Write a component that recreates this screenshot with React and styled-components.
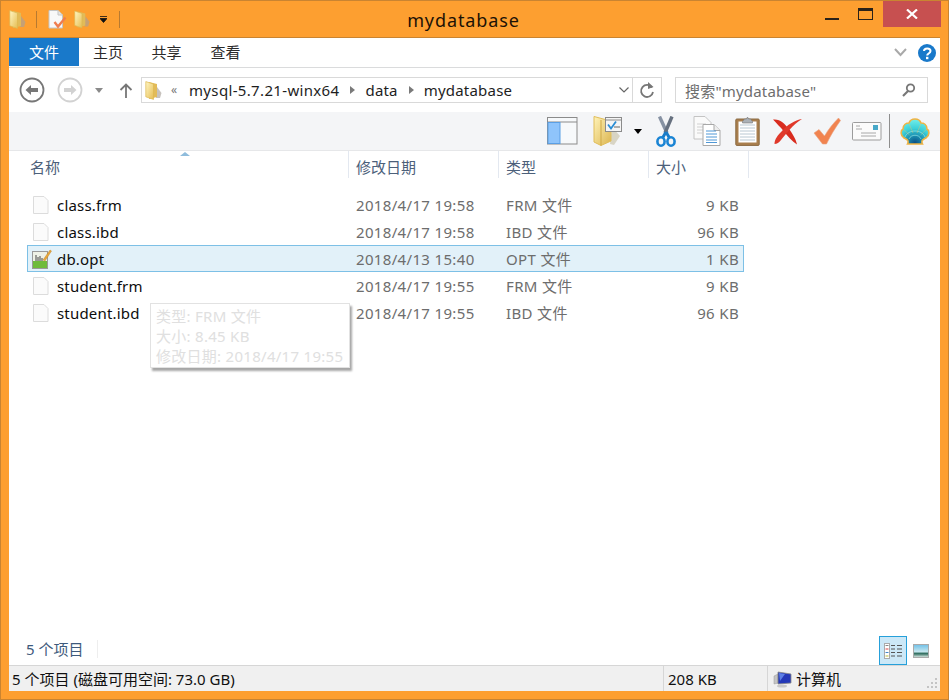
import styled, { createGlobalStyle } from "styled-components"

const GlobalStyle = createGlobalStyle`
  html, body {
    margin: 0;
    padding: 0;
    background: #fd9f30;
  }
  * {
    box-sizing: border-box;
  }
`

const uiFont = `"Noto Sans", "Noto Sans CJK SC", sans-serif`

const Window = styled.div`
  width: 949px;
  height: 700px;
  background: #fd9f30;
  border: 1px solid #c98431;
  font-family: ${uiFont};
  color: #111;
  display: flex;
  flex-direction: column;
  overflow: hidden;
`

const TitleBar = styled.div`
  height: 36px;
  flex: none;
  padding-left: 8px;
  display: flex;
  align-items: flex-start;
  position: relative;
`

const Quick = styled.div`
  display: flex;
  align-items: center;
  height: 20px;
  margin-top: 8px;
`

const QuickSep = styled.span`
  width: 1px;
  height: 17px;
  background: #b87a30;
  margin: 0 ${props => props.$right || 0}px 0 ${props => props.$left}px;
`

const QuickGap = styled.span`
  width: ${props => props.$w}px;
`

const QuickCaret = styled.svg`
  margin-left: 10px;
`

const Title = styled.div`
  position: absolute;
  left: 0;
  right: 22px;
  top: 7px;
  text-align: center;
  font-size: 18px;
  letter-spacing: .9px;
  line-height: 24px;
  color: #1c1206;
`

const WinButtons = styled.div`
  position: absolute;
  top: 0;
  right: 7px;
  display: flex;
  align-items: flex-start;
`

const WinButton = styled.div`
  width: ${props => props.$w}px;
  height: 26px;
  padding-right: ${props => props.$pr || 0}px;
  display: flex;
  align-items: center;
  justify-content: center;
  background: ${props => props.$close ? "#c75050" : "transparent"};
`

const MinBar = styled.svg`
  margin-top: 9px;
`

const Frame = styled.div`
  flex: 1;
  margin: 0 8px;
  background: #fff;
  border-top: 1px solid #c98431;
  display: flex;
  flex-direction: column;
  position: relative;
  min-height: 0;
`

const Tabs = styled.div`
  height: 30px;
  flex: none;
  display: flex;
  border-bottom: 1px solid #dadbdc;
`

const Tab = styled.div`
  width: ${props => props.$w}px;
  font-size: 15px;
  line-height: 29px;
  text-align: center;
  height: 28px;
  background: ${props => props.$active ? "#1979ca" : "transparent"};
  color: ${props => props.$active ? "#fff" : "#2b2b2b"};
`

const RibbonTail = styled.div`
  margin-left: auto;
  display: flex;
  align-items: center;
  gap: 11px;
  padding-right: 4px;
`

const NavRow = styled.div`
  height: 44px;
  flex: none;
  display: flex;
  align-items: center;
  padding-left: 10px;
`

const NavBtn = styled.div`
  display: flex;
  align-items: center;
  justify-content: center;
  width: ${props => props.$w}px;
  margin-left: ${props => props.$ml || 0}px;
`

const AddressBox = styled.div`
  width: 521px;
  height: 26px;
  margin-left: 4px;
  border: 1px solid #d9d9d9;
  display: flex;
  align-items: center;
  padding-left: 3px;
  font-size: 15px;
  color: #1e1e1e;
`

const Crumb = styled.span`
  letter-spacing: ${props => props.$wide ? ".34px" : ".2px"};
  line-height: 22px;
  margin-top: -1px;
`

const Overflow = styled.span`
  width: 8px;
  margin: 0 10px 0 9px;
  font-size: 12px;
  line-height: 12px;
  color: #777;
`

const CrumbArrow = styled.span`
  width: 0;
  height: 0;
  border-left: 5px solid #7a7a7a;
  border-top: 4px solid transparent;
  border-bottom: 4px solid transparent;
  margin: 0 10px 0 11px;
`

const AddressEnd = styled.div`
  margin-left: auto;
  height: 100%;
  display: flex;
  align-items: center;
`

const RefreshSlot = styled.div`
  width: 29px;
  height: 100%;
  border-left: 1px solid #d9d9d9;
  display: flex;
  align-items: center;
  justify-content: center;
`

const ChevronSlot = styled.div`
  width: 16px;
  display: flex;
  justify-content: center;
`

const SearchBox = styled.div`
  width: 253px;
  height: 26px;
  margin-left: 13px;
  border: 1px solid #d9d9d9;
  display: flex;
  align-items: center;
  padding: 0 11px 0 9px;
  justify-content: space-between;
  font-size: 15px;
  letter-spacing: .2px;
  color: #6d6d6d;
`

const CommandBar = styled.div`
  height: 39px;
  flex: none;
  background: #f4f5f7;
  border-bottom: 1px solid #e6e7e9;
  display: flex;
  align-items: center;
  padding-left: 538px;
`

const ToolIcon = styled.div`
  width: ${props => props.$w}px;
  margin-left: ${props => props.$ml || 0}px;
  display: flex;
  align-items: center;
  justify-content: center;
`

const ToolSep = styled.span`
  width: 1px;
  height: 34px;
  background: #8e8e8e;
  margin: 0 10px 0 7px;
`

const Caret = styled.span`
  width: 0;
  height: 0;
  border-top: 5px solid #000;
  border-left: 4.5px solid transparent;
  border-right: 4.5px solid transparent;
  margin-left: 12px;
`

const HeaderRow = styled.div`
  height: 27px;
  flex: none;
  display: flex;
  position: relative;
  padding-left: 13px;
`

const HeaderCell = styled.div`
  width: ${props => props.$w}px;
  padding-left: ${props => props.$pl || 7}px;
  font-size: 15px;
  line-height: 33px;
  color: #4c607a;
  border-right: 1px solid #e3e8f0;
`

const SortMark = styled.span`
  position: absolute;
  left: 171px;
  top: 1px;
  width: 0;
  height: 0;
  border-bottom: 4px solid #8fbcdc;
  border-left: 5px solid transparent;
  border-right: 5px solid transparent;
`

const FileList = styled.div`
  flex: 1;
  padding: 13px 0 0 18px;
  position: relative;
  min-height: 0;
`

const Row = styled.div`
  width: 717px;
  height: 27px;
  display: grid;
  grid-template-columns: 30px 299px 150px 142px 91px;
  align-items: center;
  font-size: 15px;
  border: 1px solid ${props => props.$selected ? "#7dc0e6" : "transparent"};
  background: ${props => props.$selected ? "#e2f1f9" : "transparent"};
`

const RowIcon = styled.div`
  display: flex;
  justify-content: center;
  padding-right: ${props => props.$pr}px;
`

const Name = styled.div`
  color: #0d0d0d;
  margin-left: -1px;
  letter-spacing: .18px;
`

const Cell = styled.div`
  color: #6d6d6d;
  white-space: nowrap;
  margin-left: -1px;
  letter-spacing: .34px;
`

const SizeCell = styled(Cell)`
  text-align: right;
  padding-right: 1px;
`

const Tooltip = styled.div`
  position: absolute;
  left: 141px;
  top: 125px;
  width: 200px;
  height: 65px;
  background: #fff;
  border: 1px solid #e2e2e2;
  box-shadow: 2px 3px 2px rgba(0, 0, 0, 0.35);
  padding: 2px 5px;
  font-size: 15px;
  letter-spacing: .28px;
  line-height: 20px;
  color: #e0e0e0;
  white-space: nowrap;
`

const ViewFooter = styled.div`
  height: 33px;
  flex: none;
  display: flex;
  align-items: center;
  padding-left: 17px;
  font-size: 15px;
  color: #3e5a7c;
`

const FooterCount = styled.span`
  padding-right: 14px;
  border-right: 1px solid #eee;
  line-height: 18px;
`

const ViewToggles = styled.div`
  margin-left: auto;
  height: 100%;
  display: flex;
  align-items: flex-end;
  padding-right: 6px;
`

const ViewToggle = styled.div`
  width: ${props => props.$w}px;
  height: 29px;
  display: flex;
  align-items: center;
  justify-content: center;
  background: ${props => props.$active ? "#cce8f7" : "transparent"};
  border: 1px solid ${props => props.$active ? "#26a0da" : "transparent"};
`

const StatusBar = styled.div`
  height: 26px;
  flex: none;
  background: #f0f0f0;
  border-top: 1px solid #d6d6d6;
  display: flex;
  align-items: center;
  font-size: 15px;
  position: relative;
`

const StatusCell = styled.div`
  width: ${props => props.$w}px;
  padding-left: ${props => props.$pl}px;
  height: 100%;
  display: flex;
  align-items: center;
  gap: 3px;
  border-left: ${props => props.$line ? "1px solid #d6d6d6" : "none"};
  white-space: nowrap;
  color: #101010;
`

const Grip = styled.svg`
  position: absolute;
  right: 2px;
  bottom: 2px;
`

const BottomEdge = styled.div`
  height: 8px;
  flex: none;
`

const FolderIcon = ({ w = 17, h = 19 }) => (
  <svg width={w} height={h} viewBox="0 0 17 19">
    <defs>
      <linearGradient id="folderFace" x1="0" y1="0" x2="1" y2="1">
        <stop offset="0" stopColor="#fff6c4" />
        <stop offset="1" stopColor="#e6bd52" />
      </linearGradient>
    </defs>
    <path d="M12 6 L16.5 12 L15 17 H11 Z" fill="#a9a29a" opacity=".65" />
    <path d="M4 1 L12 3 V16 L4 18 Z" fill="#e2bb58" />
    <path d="M.8 .6 L8.5 3 V18.4 L.8 15.8 Z" fill="url(#folderFace)" stroke="#dcb750" strokeWidth=".7" />
  </svg>
)

const PageCheckIcon = () => (
  <svg width="19" height="19" viewBox="0 0 19 19">
    <path d="M1 .5 H10 L14.5 5 V18 H1 Z" fill="#f8f8f8" stroke="#c4c4c4" />
    <path d="M10 .5 V5 H14.5" fill="#e4e4e4" stroke="#c4c4c4" />
    <path d="M6.5 12 L10 16.5 L17.5 7.5" fill="none" stroke="#ef7d4f" strokeWidth="2.4" />
  </svg>
)

const BackIcon = ({ color }) => (
  <svg width="26" height="26" viewBox="0 0 26 26">
    <circle cx="13" cy="13" r="11.5" fill="#fff" stroke={color} strokeWidth="1.8" />
    <path d="M19 11 H12 V8 L6.5 13 L12 18 V15 H19 Z" fill={color} />
  </svg>
)

const ForwardIcon = ({ color }) => (
  <svg width="26" height="26" viewBox="0 0 26 26">
    <circle cx="13" cy="13" r="11.5" fill="#fff" stroke={color} strokeWidth="1.8" />
    <path d="M7 11 H14 V8 L19.5 13 L14 18 V15 H7 Z" fill={color} />
  </svg>
)

const SmallCaret = () => (
  <svg width="8" height="5" viewBox="0 0 8 5">
    <path d="M0 0 H8 L4 5 Z" fill="#8a8a8a" />
  </svg>
)

const UpIcon = () => (
  <svg width="14" height="15" viewBox="0 0 14 15">
    <path d="M7 1 V15 M1.5 7 L7 1.5 L12.5 7" fill="none" stroke="#777" strokeWidth="1.8" />
  </svg>
)

const LayoutIcon = () => (
  <svg width="31" height="28" viewBox="0 0 31 28">
    <rect x=".5" y=".5" width="29.5" height="26.5" fill="#f7f9fb" stroke="#8b8b8b" />
    <path d="M.5 5 H30" stroke="#8b8b8b" />
    <rect x="1" y="5.5" width="12" height="21" fill="#8fc4fb" stroke="#5b9fe4" />
  </svg>
)

const FolderOptionsIcon = () => (
  <svg width="29" height="30" viewBox="0 0 29 30">
    <defs>
      <linearGradient id="optFolder" x1="0" y1="0" x2="1" y2="1">
        <stop offset="0" stopColor="#fff3b8" />
        <stop offset="1" stopColor="#dcb550" />
      </linearGradient>
    </defs>
    <path d="M19 11 L27 20 L21 29 L17 28 Z" fill="#d8d4c4" />
    <path d="M1 .5 L18 5 V25 L8 29.5 L1 26 Z" fill="url(#optFolder)" stroke="#e0bd5a" />
    <path d="M8 4 V29.5" stroke="#cfa845" />
    <rect x="12.5" y="1.5" width="16" height="14" fill="#f5f5f5" stroke="#8b8b8b" />
    <path d="M12.5 4 H28.5" stroke="#8b8b8b" />
    <path d="M15 8.5 L18 12.5 L23 5.5" fill="none" stroke="#2a8dd4" strokeWidth="1.8" />
    <path d="M21 11 H27" stroke="#666" />
  </svg>
)

const ScissorsIcon = () => (
  <svg width="20" height="31" viewBox="0 0 20 31">
    <path d="M3.5 .5 L11 17" stroke="#8792a3" strokeWidth="3.4" />
    <path d="M16 .5 L9 17" stroke="#66707f" strokeWidth="3.4" />
    <path d="M10 16 L6.5 22 M10 16 L13.5 22" stroke="#1a7cc8" strokeWidth="3" />
    <ellipse cx="5" cy="25.5" rx="3.6" ry="4.2" fill="none" stroke="#1a84d4" strokeWidth="2.6" />
    <ellipse cx="15" cy="25.5" rx="3.6" ry="4.2" fill="none" stroke="#1a84d4" strokeWidth="2.6" />
  </svg>
)

const CopyIcon = () => (
  <svg width="28" height="30" viewBox="0 0 28 30">
    <path d="M1 .5 H12 L18 6.5 V23 H1 Z" fill="#fafafa" stroke="#c4c4c4" />
    <path d="M4 8 H13 M4 11 H13 M4 14 H13 M4 17 H9" stroke="#d0d0d0" />
    <path d="M10 8.5 H21 L27 14.5 V29.5 H10 Z" fill="#fff" stroke="#a8a8a8" />
    <path d="M21 8.5 V14.5 H27" fill="#eee" stroke="#a8a8a8" />
    <path d="M13 15 H23 M13 18 H24 M13 21 H24 M13 24 H24 M13 26.5 H24" stroke="#4f97d6" />
  </svg>
)

const ClipboardIcon = () => (
  <svg width="25" height="30" viewBox="0 0 25 30">
    <rect x=".8" y="3" width="23.4" height="26.4" rx="1" fill="#a97f4e" stroke="#8b6a42" />
    <rect x="3.5" y="5.5" width="18" height="21" fill="#fff" />
    <path d="M5 9 H20 M5 12 H20 M5 15 H20 M5 18 H20 M5 21 H20 M5 24 H20" stroke="#b9c8d2" />
    <path d="M7.5 5.5 L9.5 3 H11.5 L12.5 1 L13.5 3 H15.5 L17.5 5.5 V7 H7.5 Z" fill="#aab0b6" stroke="#777" strokeWidth=".6" />
  </svg>
)

const CrossIcon = () => (
  <svg width="30" height="27" viewBox="0 0 30 27">
    <path d="M1 1.5 C8 .5 13 6 17 11 C20 15 24 21 25 26.5 C20 23 15.5 18 12 13.5 C8 8.5 4.5 5.5 1 1.5 Z" fill="#d92c1f" />
    <path d="M30 1 C23 2 15 7 10 13 C6 17 2.5 21 2.5 26 C5 26 7 24.5 9 22 C13.5 16.5 21 6.5 30 1 Z" fill="#e0382a" />
  </svg>
)

const CheckIcon = () => (
  <svg width="28" height="28" viewBox="0 0 28 28">
    <path d="M1 16 L6 12.5 L11.5 19 C15.5 12 20.5 6 25.5 1 L27.5 3.5 C22.5 10.5 17.5 18.5 13.5 27 H9.5 Z" fill="#f1834f" stroke="#e9a27f" strokeWidth=".6" />
  </svg>
)

const MailIcon = () => (
  <svg width="30" height="19" viewBox="0 0 30 19">
    <rect x=".5" y=".5" width="28.5" height="17.5" rx="1" fill="#fbfbfb" stroke="#9c9c9c" />
    <rect x="21" y="3" width="5" height="5" fill="#47a8c8" />
    <path d="M4 4 H8 M4 7 H10 M9 11 H24 M9 14 H24" stroke="#a8a8a8" />
  </svg>
)

const ShellIcon = () => (
  <svg width="30" height="27" viewBox="0 0 30 27">
    <defs>
      <radialGradient id="shellFill" cx="0.5" cy="0.95" r="0.95">
        <stop offset="0" stopColor="#0b4f86" />
        <stop offset="0.3" stopColor="#1b8fb0" />
        <stop offset="0.6" stopColor="#3cd0d8" />
        <stop offset="1" stopColor="#74efea" />
      </radialGradient>
    </defs>
    <path d="M7.5 26 C9.5 22 6.5 21.5 3.5 19.5 C.5 17 .3 12.5 3 11 C3 6.5 6.5 5 9 5 C10 2 13 1 15 1 C17 1 20 2 21 5 C23.5 5 27 6.5 27 11 C29.7 12.5 29.5 17 26.5 19.5 C23.5 21.5 20.5 22 22.5 26 Z" fill="url(#shellFill)" stroke="#eeb343" strokeWidth="1.6" />
    <path d="M5 19 C8 11 22 11 25 19 M9 21 C11 16 19 16 21 21" fill="none" stroke="#a8f2ee" strokeWidth=".9" opacity=".65" />
    <path d="M9 5.5 L13 15 M21 5.5 L17 15 M3.2 11 L9.5 17 M26.8 11 L20.5 17" stroke="#e6c36a" strokeWidth=".7" opacity=".6" />
  </svg>
)

const PageIcon = () => (
  <svg width="16" height="18" viewBox="0 0 16 18">
    <path d="M.5 .5 H11 L15 4.5 V17.5 H.5 Z" fill="#fbfbfb" stroke="#dcdcdc" />
  </svg>
)

const OptIcon = () => (
  <svg width="20" height="20" viewBox="0 0 20 20">
    <rect x=".5" y="2.5" width="15" height="17" fill="#eef1e6" stroke="#9a9a9a" />
    <rect x="1" y="12" width="14" height="7" fill="#6ebb3c" />
    <path d="M4 6 V12 M6 8 V12 M8 7 V12 M10 9 V12" stroke="#444" />
    <path d="M11 11 L18 1 L19.5 2 L13 12 Z" fill="#e8a83a" stroke="#b87a20" strokeWidth=".4" />
  </svg>
)

const DetailsIcon = () => (
  <svg width="18" height="16" viewBox="0 0 18 16">
    <rect x=".5" y=".5" width="5" height="15" fill="#fff" stroke="#aaa" />
    <path d="M1.5 2.5 H4.5" stroke="#888" />
    <path d="M1.5 6 H4.5" stroke="#d44" />
    <path d="M1.5 9.5 H4.5" stroke="#48c" />
    <path d="M1.5 13 H4.5" stroke="#bb3" />
    <path d="M7 2.5 H11 M13 2.5 H18 M7 6 H11 M13 6 H18 M7 9.5 H11 M13 9.5 H18 M7 13 H11 M13 13 H18" stroke="#555" />
  </svg>
)

const PreviewIcon = () => (
  <svg width="16" height="14" viewBox="0 0 16 14">
    <defs>
      <linearGradient id="previewSky" x1="0" y1="0" x2="0" y2="1">
        <stop offset="0" stopColor="#6fc0e8" />
        <stop offset=".55" stopColor="#c5e6ee" />
        <stop offset=".7" stopColor="#2f6d5e" />
        <stop offset="1" stopColor="#e8f2ee" />
      </linearGradient>
    </defs>
    <rect x=".5" y=".5" width="15" height="13" fill="url(#previewSky)" stroke="#aaa" />
  </svg>
)

const ComputerIcon = () => (
  <svg width="20" height="18" viewBox="0 0 20 18">
    <path d="M1 6 L5 4 V13 L1 14 Z" fill="#c4c4c4" stroke="#999" strokeWidth=".5" />
    <path d="M5 2 L18 4 V13 L5 14 Z" fill="#2438b8" stroke="#888" strokeWidth=".8" />
    <path d="M6 3 L12 4 L7 11 Z" fill="#5d7fe6" />
    <ellipse cx="9" cy="16" rx="5" ry="1.5" fill="#c8c8c8" />
  </svg>
)

const files = [
  { name: "class.frm", date: "2018/4/17 19:58", type: "FRM 文件", size: "9 KB" },
  { name: "class.ibd", date: "2018/4/17 19:58", type: "IBD 文件", size: "96 KB" },
  { name: "db.opt", date: "2018/4/13 15:40", type: "OPT 文件", size: "1 KB", selected: true },
  { name: "student.frm", date: "2018/4/17 19:55", type: "FRM 文件", size: "9 KB" },
  { name: "student.ibd", date: "2018/4/17 19:55", type: "IBD 文件", size: "96 KB" },
]

const App = () => (
  <Window>
    <GlobalStyle />
    <TitleBar>
      <Quick>
        <FolderIcon />
        <QuickSep $left={10} $right={11} />
        <PageCheckIcon />
        <QuickGap $w={7} />
        <FolderIcon w={16} />
        <QuickCaret width="7" height="7" viewBox="0 0 7 7">
          <path d="M0 .5 H7 M0 2.5 H7 L3.5 6.5 Z" fill="#111" stroke="#111" strokeWidth=".8" />
        </QuickCaret>
        <QuickSep $left={12} />
      </Quick>
      <Title>mydatabase</Title>
      <WinButtons>
        <WinButton $w={29} $pr={3}>
          <MinBar width="14" height="2" viewBox="0 0 14 2"><rect width="14" height="2" fill="#2a2219" /></MinBar>
        </WinButton>
        <WinButton $w={35}>
          <svg width="15" height="12" viewBox="0 0 15 12">
            <rect x=".5" y=".5" width="14" height="11" fill="none" stroke="#2a2219" />
            <rect x=".5" y=".5" width="14" height="2.5" fill="#2a2219" />
          </svg>
        </WinButton>
        <WinButton $w={58} $close>
          <svg width="12" height="10" viewBox="0 0 12 10">
            <path d="M1 0.5 L11 9.5 M11 0.5 L1 9.5" stroke="#fff" strokeWidth="2.2" />
          </svg>
        </WinButton>
      </WinButtons>
    </TitleBar>

    <Frame>
      <Tabs>
        <Tab $active $w={70}>文件</Tab>
        <Tab $w={58}>主页</Tab>
        <Tab $w={59}>共享</Tab>
        <Tab $w={59}>查看</Tab>
        <RibbonTail>
          <svg width="13" height="9" viewBox="0 0 13 9">
            <path d="M1 1 L6.5 7 L12 1" fill="none" stroke="#a9a9a9" strokeWidth="2" />
          </svg>
          <svg width="18" height="18" viewBox="0 0 18 18">
            <circle cx="9" cy="9" r="9" fill="#1979ca" />
            <path d="M6 7 C6 3.5 12.5 3.5 12.5 7 C12.5 9.5 9.2 9.5 9.2 11.5" fill="none" stroke="#fff" strokeWidth="2" />
            <rect x="8" y="12.8" width="2.4" height="2.4" fill="#fff" />
          </svg>
        </RibbonTail>
      </Tabs>

      <NavRow>
        <NavBtn $w={26}><BackIcon color="#777" /></NavBtn>
        <NavBtn $w={26} $ml={12}><ForwardIcon color="#d2d2d2" /></NavBtn>
        <NavBtn $w={32}><SmallCaret /></NavBtn>
        <NavBtn $w={22}><UpIcon /></NavBtn>
        <AddressBox>
          <FolderIcon />
          <Overflow>«</Overflow>
          <Crumb $wide>mysql-5.7.21-winx64</Crumb>
          <CrumbArrow />
          <Crumb>data</Crumb>
          <CrumbArrow />
          <Crumb>mydatabase</Crumb>
          <AddressEnd>
            <ChevronSlot>
              <svg width="10" height="6" viewBox="0 0 10 6">
                <path d="M.5 .5 L5 5 L9.5 .5" fill="none" stroke="#666" strokeWidth="1.2" />
              </svg>
            </ChevronSlot>
            <RefreshSlot>
              <svg width="16" height="17" viewBox="0 0 16 17">
                <path d="M13 5.5 A6 6 0 1 0 14 10" fill="none" stroke="#777" strokeWidth="1.8" />
                <path d="M9 0 L9 7 L14.5 5 Z" fill="#777" />
              </svg>
            </RefreshSlot>
          </AddressEnd>
        </AddressBox>
        <SearchBox>
          <span>搜索"mydatabase"</span>
          <svg width="14" height="14" viewBox="0 0 14 14">
            <circle cx="8.5" cy="5" r="3.7" fill="none" stroke="#777" strokeWidth="1.8" />
            <path d="M6 8 L1 13" stroke="#777" strokeWidth="2.2" />
          </svg>
        </SearchBox>
      </NavRow>

      <CommandBar>
        <ToolIcon $w={31}><LayoutIcon /></ToolIcon>
        <ToolIcon $w={29} $ml={15}><FolderOptionsIcon /></ToolIcon>
        <Caret />
        <ToolIcon $w={20} $ml={14}><ScissorsIcon /></ToolIcon>
        <ToolIcon $w={28} $ml={17}><CopyIcon /></ToolIcon>
        <ToolIcon $w={25} $ml={14}><ClipboardIcon /></ToolIcon>
        <ToolIcon $w={30} $ml={12}><CrossIcon /></ToolIcon>
        <ToolIcon $w={28} $ml={11}><CheckIcon /></ToolIcon>
        <ToolIcon $w={30} $ml={11}><MailIcon /></ToolIcon>
        <ToolSep />
        <ToolIcon $w={30}><ShellIcon /></ToolIcon>
      </CommandBar>

      <HeaderRow>
        <SortMark />
        <HeaderCell $w={327} $pl={8}>名称</HeaderCell>
        <HeaderCell $w={150}>修改日期</HeaderCell>
        <HeaderCell $w={150}>类型</HeaderCell>
        <HeaderCell $w={100}>大小</HeaderCell>
      </HeaderRow>

      <FileList>
        {files.map(file => (
          <Row key={file.name} $selected={file.selected}>
            {file.selected
              ? <RowIcon $pr={3}><OptIcon /></RowIcon>
              : <RowIcon $pr={4}><PageIcon /></RowIcon>}
            <Name>{file.name}</Name>
            <Cell>{file.date}</Cell>
            <Cell>{file.type}</Cell>
            <SizeCell>{file.size}</SizeCell>
          </Row>
        ))}
        <Tooltip>
          类型: FRM 文件<br />
          大小: 8.45 KB<br />
          修改日期: 2018/4/17 19:55
        </Tooltip>
      </FileList>

      <ViewFooter>
        <FooterCount>5 个项目</FooterCount>
        <ViewToggles>
          <ViewToggle $active $w={28}><DetailsIcon /></ViewToggle>
          <ViewToggle $w={27}><PreviewIcon /></ViewToggle>
        </ViewToggles>
      </ViewFooter>

      <StatusBar>
        <StatusCell $w={654} $pl={3}>5 个项目 (磁盘可用空间: 73.0 GB)</StatusCell>
        <StatusCell $w={104} $pl={4} $line>208 KB</StatusCell>
        <StatusCell $w={173} $pl={5} $line><ComputerIcon />计算机</StatusCell>
        <Grip width="12" height="12" viewBox="0 0 12 12">
          <path d="M9 1 h2 v2 h-2 z M5 5 h2 v2 h-2 z M9 5 h2 v2 h-2 z M1 9 h2 v2 h-2 z M5 9 h2 v2 h-2 z M9 9 h2 v2 h-2 z" fill="#c4c4c4" />
        </Grip>
      </StatusBar>
    </Frame>
    <BottomEdge />
  </Window>
)

export default App
